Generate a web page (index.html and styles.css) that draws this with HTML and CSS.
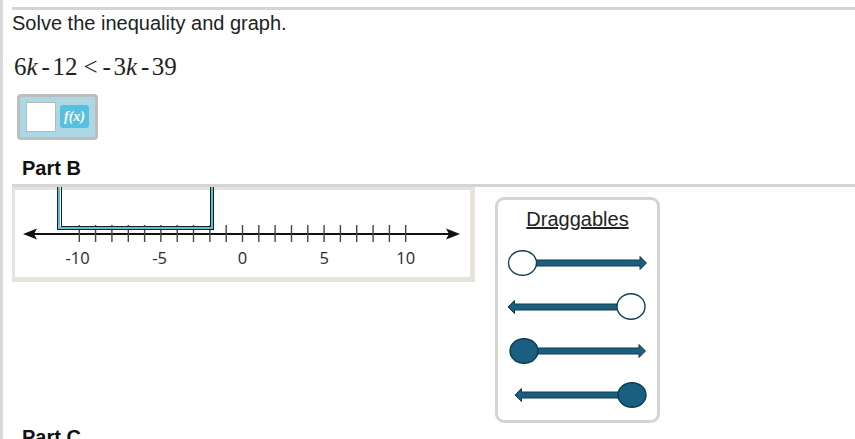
FILE: index.html
```html
<!DOCTYPE html>
<html lang="en">
<head>
<meta charset="utf-8">
<title>Solve the inequality and graph</title>
<link rel="stylesheet" href="styles.css">
</head>
<body>
<div class="page">
  <div class="question">
    <p class="prompt">Solve the inequality and graph.</p>
    <div class="math">6<i>k</i><span class="op">-</span>12<span class="rel">&lt;</span><span class="op op-lead">-</span>3<i>k</i><span class="op">-</span>39</div>
    <div class="answer-widget">
      <div class="answer-input"></div>
      <div class="fx-btn"><i>f(x)</i></div>
    </div>
    <h3 class="part-title">Part B</h3>
    <div class="part-b">
      <div class="graph-frame">
        <svg class="number-line" width="455" height="87" viewBox="0 0 455 87">
          <line x1="14" y1="44" x2="440" y2="44" stroke="#111" stroke-width="2"/>
          <path d="M8,44 L22,38.5 L19,44 L22,49.5 Z" fill="#111"/>
          <path d="M445,44 L431,38.5 L434,44 L431,49.5 Z" fill="#111"/>
          <g stroke="#444" stroke-width="1.4">
            <line x1="64.3" y1="35" x2="64.3" y2="52"/>
            <line x1="80.6" y1="35" x2="80.6" y2="52"/>
            <line x1="96.9" y1="35" x2="96.9" y2="52"/>
            <line x1="113.3" y1="35" x2="113.3" y2="52"/>
            <line x1="129.6" y1="35" x2="129.6" y2="52"/>
            <line x1="145.9" y1="35" x2="145.9" y2="52"/>
            <line x1="162.2" y1="35" x2="162.2" y2="52"/>
            <line x1="178.5" y1="35" x2="178.5" y2="52"/>
            <line x1="194.9" y1="35" x2="194.9" y2="52"/>
            <line x1="211.2" y1="35" x2="211.2" y2="52"/>
            <line x1="227.5" y1="35" x2="227.5" y2="52"/>
            <line x1="243.8" y1="35" x2="243.8" y2="52"/>
            <line x1="260.1" y1="35" x2="260.1" y2="52"/>
            <line x1="276.5" y1="35" x2="276.5" y2="52"/>
            <line x1="292.8" y1="35" x2="292.8" y2="52"/>
            <line x1="309.1" y1="35" x2="309.1" y2="52"/>
            <line x1="325.4" y1="35" x2="325.4" y2="52"/>
            <line x1="341.7" y1="35" x2="341.7" y2="52"/>
            <line x1="358.1" y1="35" x2="358.1" y2="52"/>
            <line x1="374.4" y1="35" x2="374.4" y2="52"/>
            <line x1="390.7" y1="35" x2="390.7" y2="52"/>
          </g>
          <g class="nl-labels" text-anchor="middle">
            <text x="62.5" y="73.5">-10</text>
            <text x="144.5" y="73.5">-5</text>
            <text x="227.5" y="73.5">0</text>
            <text x="309.1" y="73.5">5</text>
            <text x="390.7" y="73.5">10</text>
          </g>
        </svg>
        <div class="dropzone"></div>
      </div>
      <div class="draggables">
        <div class="drag-title">Draggables</div>
        <svg class="drag-item" width="159" height="44" viewBox="0 0 159 44">
          <path d="M36,19 H142 V15.5 L148.5,22 L142,28.5 V25 H36 Z" fill="#1c5e7f" stroke="#0f3a50" stroke-width="1"/>
          <ellipse cx="24.5" cy="22" rx="14" ry="12.3" fill="#fff" stroke="#123f57" stroke-width="1.4"/>
        </svg>
        <svg class="drag-item" width="159" height="44" viewBox="0 0 159 44">
          <path d="M122,19 H16.5 V15.5 L10,22 L16.5,28.5 V25 H122 Z" fill="#1c5e7f" stroke="#0f3a50" stroke-width="1"/>
          <ellipse cx="133" cy="21.5" rx="14" ry="12.8" fill="#fff" stroke="#123f57" stroke-width="1.4"/>
        </svg>
        <svg class="drag-item" width="159" height="44" viewBox="0 0 159 44">
          <path d="M38,19 H141 V15.5 L147.5,22 L141,28.5 V25 H38 Z" fill="#1c5e7f" stroke="#0f3a50" stroke-width="1"/>
          <ellipse cx="26" cy="22" rx="14" ry="12.3" fill="#1a5e80" stroke="#0f3a50" stroke-width="1.4"/>
        </svg>
        <svg class="drag-item" width="159" height="44" viewBox="0 0 159 44">
          <path d="M122,19 H23.5 V15.5 L17,22 L23.5,28.5 V25 H122 Z" fill="#1c5e7f" stroke="#0f3a50" stroke-width="1"/>
          <ellipse cx="134" cy="22" rx="14" ry="12.3" fill="#1a5e80" stroke="#0f3a50" stroke-width="1.4"/>
        </svg>
      </div>
    </div>
    <h3 class="part-title part-c">Part C</h3>
  </div>
</div>
</body>
</html>
```
FILE: styles.css
```css
html, body {
  margin: 0;
  padding: 0;
  background: #fff;
  overflow: hidden;
}

.page {
  box-sizing: border-box;
  height: 439px;
  overflow: hidden;
  border-left: 3px solid #d9d9d9;
  padding: 7px 0 0 9px;
  font-family: "Liberation Sans", Arial, sans-serif;
  color: #222;
}

.question {
  border-top: 3px solid #d4d4d4;
}

.prompt {
  margin: 0;
  padding-top: 2px;
  font-size: 20px;
  line-height: 23px;
}

.math {
  margin-top: 17px;
  padding-left: 2px;
  font-family: "Liberation Serif", "Times New Roman", serif;
  font-size: 25px;
  line-height: 30px;
  color: #222;
}

.math .op {
  margin: 0 2.5px 0 4px;
}

.math .op-lead {
  margin-left: 0;
}

.math .rel {
  margin: 0 5px 0 6px;
}

.answer-widget {
  display: flex;
  align-items: flex-start;
  gap: 4px;
  width: 81px;
  height: 46px;
  box-sizing: border-box;
  margin: 12px 0 0 5px;
  padding: 5px 6px;
  border: 3px solid #bdbdbd;
  border-radius: 4px;
  background: #acd8e6;
}

.answer-input {
  width: 30px;
  height: 30px;
  box-sizing: border-box;
  border: 1px solid #b9b9b9;
  background: #fff;
}

.fx-btn {
  margin-top: 3px;
  width: 29px;
  height: 23px;
  border-radius: 3px;
  background: #57bfdf;
  color: #fff;
  font-family: "Liberation Serif", "Times New Roman", serif;
  font-size: 14px;
  font-weight: bold;
  line-height: 23px;
  text-align: center;
}

.part-title {
  margin: 16.5px 0 4.5px 10px;
  font-size: 20px;
  line-height: 23px;
  font-weight: bold;
  color: #111;
}

.part-c {
  margin-top: 3px;
}

.part-b {
  display: flex;
  align-items: flex-start;
  gap: 20px;
  border-top: 3px solid #d4d4d4;
}

.graph-frame {
  position: relative;
  width: 463px;
  height: 95px;
  box-sizing: border-box;
  border-style: solid;
  border-color: #e6e2dc;
  border-width: 3px 5px 5px 3px;
  background: #fff;
}

.number-line {
  display: block;
}

.nl-labels {
  font-family: "Open Sans", sans-serif;
  font-size: 16.5px;
  fill: #2a2a2a;
}

.dropzone {
  position: absolute;
  left: 42px;
  top: -3px;
  width: 157px;
  height: 43px;
  box-sizing: border-box;
  border: 1px solid #1f1f1f;
  border-top: none;
}

.dropzone::before {
  content: "";
  position: absolute;
  left: 0;
  right: 0;
  top: 0;
  bottom: 0;
  border: 2.5px solid #5bc0de;
  border-top: none;
}

.dropzone::after {
  content: "";
  position: absolute;
  left: 2.5px;
  right: 2.5px;
  top: 0;
  bottom: 2.5px;
  border: 1px solid #1f1f1f;
  border-top: none;
}

.draggables {
  width: 165px;
  height: 226px;
  box-sizing: border-box;
  margin-top: 10px;
  padding-top: 8px;
  border: 3px solid #d4d4d4;
  border-radius: 9px;
  background: #fff;
  text-align: center;
}

.drag-title {
  font-size: 20px;
  line-height: 23px;
  text-decoration: underline;
  color: #222;
  margin-bottom: 10px;
}

.drag-item {
  display: block;
}
```
